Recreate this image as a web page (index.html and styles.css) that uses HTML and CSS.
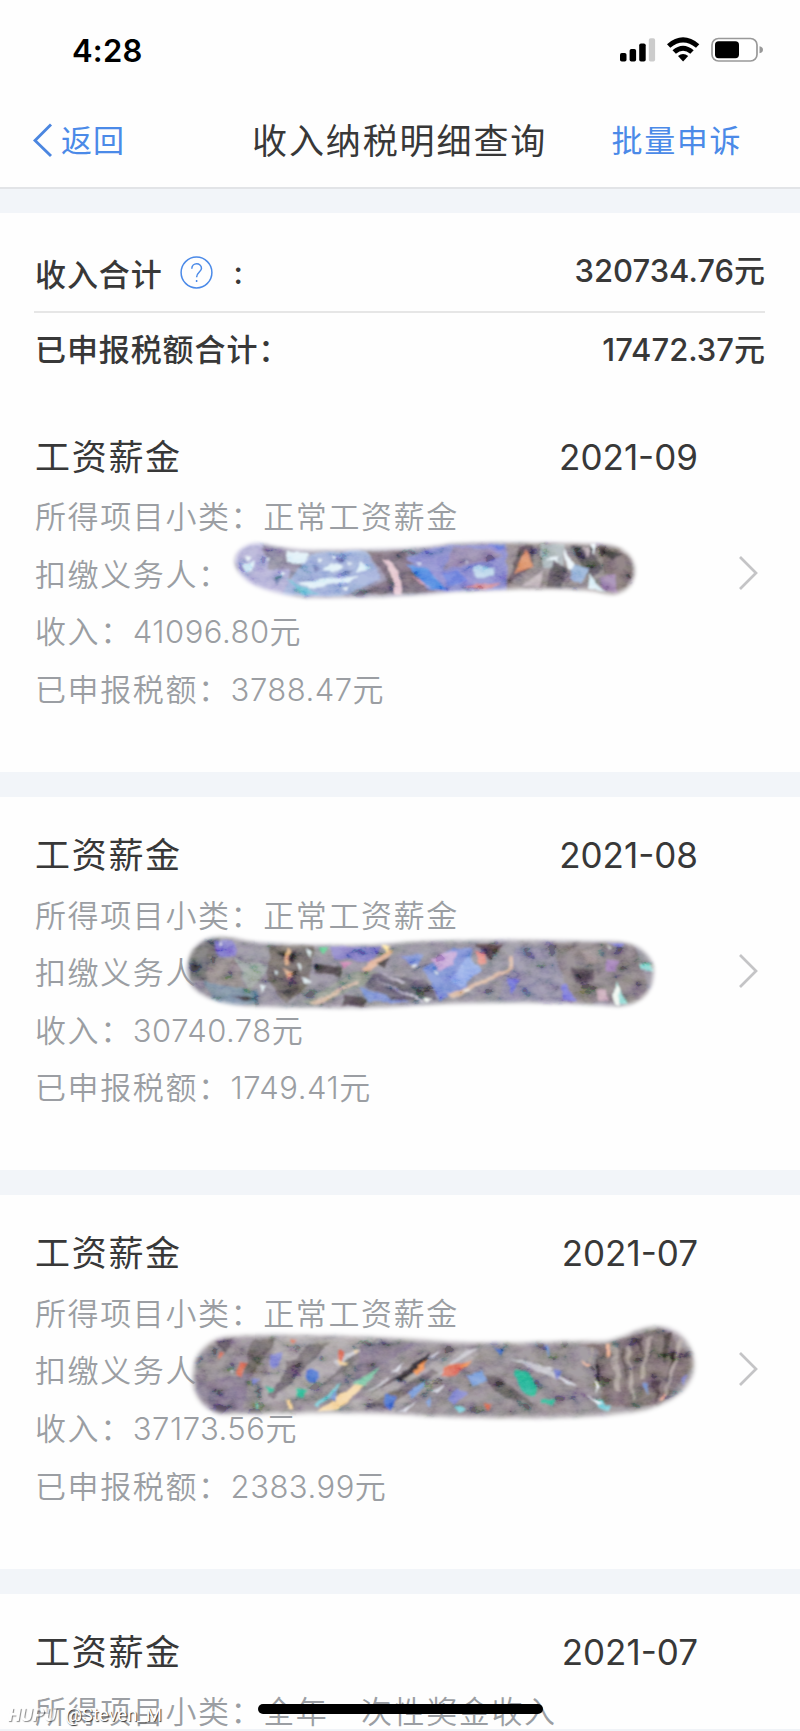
FILE: index.html
```html
<!DOCTYPE html>
<html lang="zh-CN">
<head>
<meta charset="utf-8">
<title>收入纳税明细查询</title>
<link rel="stylesheet" href="styles.css">
</head>
<body>
<div class="screen">
  <header class="status">
    <span class="clock">4:28</span>
    <svg class="status-icons" viewBox="0 0 144 26" width="144" height="26">
      <rect x="0" y="16" width="6.5" height="8.5" rx="1.8"/>
      <rect x="9.6" y="12" width="6.5" height="12.5" rx="1.8"/>
      <rect x="19.2" y="6.500" width="6.5" height="18" rx="1.8"/>
      <rect x="28.800" y="1.200" width="6.3" height="23.300" rx="1.800" fill="#ccc"/>
      <path d="M47 7.200Q63 -6.500 79.300 7.200L76 10.800Q63 .2 50.300 10.800Z"/>
      <path d="M52.500 13.200Q63 4.200 73.700 13.200L70.300 16.700Q63 10.800 55.900 16.700Z"/>
      <path d="M58 19Q63 15 68.200 19L63.100 24.600Z"/>
      <rect x="92" y="1.500" width="45" height="22.500" rx="6.500" fill="#fff" stroke="#999" stroke-width="1.700"/>
      <rect x="95" y="4.200" width="24" height="17" rx="3.600"/>
      <path d="M139.500 9.300Q143 10 143 12.800Q143 15.500 139.500 16.300Z" fill="#999"/>
    </svg>
  </header>
  <nav class="nav">
    <a class="back"><svg width="20" height="35" viewBox="0 0 20 35"><path d="M18 1.500L2 17.500L18 33" fill="none" stroke="#4b86e0" stroke-width="2.900"/></svg><span>返回</span></a>
    <h1 class="nav-title">收入纳税明细查询</h1>
    <a class="batch">批量申诉</a>
  </nav>
  <div class="band first"></div>
  <section class="summary">
    <div class="sum-row income">
      <span class="sum-label">收入合计</span>
      <svg class="help" width="33" height="33" viewBox="0 0 33 33" fill="none" stroke="#4b8ae8" stroke-width="1.500"><circle cx="16.500" cy="16.500" r="15.400"/><path d="M11.800 12.800C11.800 6.200 21.500 6.400 21.500 12.300C21.500 16 16.600 16.300 16.600 21.300"/><path d="M16.600 24v2"/></svg>
      <span class="sum-label colon">:</span>
      <span class="sum-value"><span class="n">320734.76</span>元</span>
    </div>
    <div class="sum-row tax">
      <span class="sum-label">已申报税额合计：</span>
      <span class="sum-value"><span class="n">17472.37</span>元</span>
    </div>
  </section>

  <article class="card">
    <div class="head"><h2>工资薪金</h2><time>2021-09</time></div>
    <p>所得项目小类：正常工资薪金</p>
    <p>扣缴义务人：</p>
    <p>收入：<span class="n">41096.80</span>元</p>
    <p>已申报税额：<span class="n">3788.47</span>元</p>
    <svg class="arrow" width="20" height="36" viewBox="0 0 20 36"><path d="M2 2L18 18L2 34"/></svg>
    <svg class="smudge s1" width="440" height="90" viewBox="0 0 1320 270">
      <defs>
        <filter id="soft" x="-5%" y="-20%" width="110%" height="140%"><feGaussianBlur stdDeviation="7"/></filter>
        <filter id="shard" x="-5%" y="-20%" width="110%" height="140%"><feTurbulence type="fractalNoise" baseFrequency=".02 .03" numOctaves="2" seed="4" result="t"/><feDisplacementMap in="SourceGraphic" in2="t" scale="18" xChannelSelector="R" yChannelSelector="G"/><feGaussianBlur stdDeviation="3.500"/></filter>
        <filter id="grain" x="0" y="0" width="100%" height="100%"><feTurbulence type="fractalNoise" baseFrequency=".018 .026" numOctaves="4" seed="8"/><feColorMatrix values="2.2 .6 0 0 -.9  1.800 1 0 0 -.9  1.800 .4 .6 0 -.9  0 0 0 0 1"/></filter>
        <mask id="m1"><path filter="url(#soft)" fill="#fff" d="M45 130C45 95 75 70 115 72C170 78 200 92 300 92C420 88 580 94 690 72C800 66 1000 68 1160 74C1215 82 1245 115 1243 155C1240 205 1195 230 1155 220C1090 200 900 204 700 214C550 232 380 232 260 232C140 216 60 190 45 130Z"/></mask>
      </defs>
      <g mask="url(#m1)">
        <rect width="1320" height="270" fill="#918ca5"/>
        <g filter="url(#shard)">
          <path fill="#aaa7d2" d="M40 60H190L220 230H60Z"/><path fill="#98a9d6" d="M270 100L440 90L480 180L360 230H180L230 150Z"/>
          <path fill="#8a879c" d="M120 60L210 80L250 145L150 150Z"/><path fill="#dff0f8" d="M200 95L265 98L255 130L205 127ZM65 130L105 125L98 150L72 154ZM310 145L350 130L370 140L340 160ZM420 120L450 145L410 155ZM230 185L420 168L380 190L270 205Z"/>
          <path fill="#ecf7fb" d="M75 108L92 112L82 122ZM135 112L148 117L139 124ZM180 155L195 160L185 170ZM290 115L305 120L296 128ZM340 105L352 112L343 118ZM385 125L398 130L388 138ZM365 200L385 198L380 210ZM258 210L272 208L262 225Z"/>
          <path fill="#6b77ab" d="M280 135L305 145L285 155ZM350 115L380 120L360 130ZM370 155L400 150L380 165ZM160 175L190 165L170 195Z"/>
          <path fill="#756677" d="M435 90L560 95L650 220H420L500 180Z"/><path fill="#e7c7d2" d="M485 115L510 120Q550 165 545 225H520Q525 160 485 115Z"/>
          <path fill="#8283c9" d="M560 110L680 75H860V215H650Z"/><path fill="#4d88df" d="M555 130L620 145L680 210H630Z"/><path fill="#cf9daf" d="M570 160L640 205L600 190Z"/>
          <path fill="#b8d3ea" d="M760 140L825 145L820 170H765Z"/><path fill="#8d80a5" d="M700 80L800 85L850 110L670 150Z"/><path fill="#5f74d8" d="M670 160L720 150L740 180L680 205ZM800 72L855 70L845 90Z"/><path fill="#d3dbf0" d="M580 126L605 130L600 136ZM735 118L745 124L737 130Z"/>
          <path fill="#8c8386" d="M860 65H1260V240H860Z"/><path fill="#60535c" d="M900 75L940 75V140L860 190Z"/><path fill="#d88663" d="M920 90L940 140L880 160Z"/>
          <path fill="#a3aeb4" d="M960 75H1030V145L970 140Z"/><path fill="#5b545d" d="M1000 125L1045 150L1020 205H980ZM1050 75L1110 80L1150 150L1110 180Z"/>
          <path fill="#e9f4fb" d="M1030 80L1070 150L1045 150ZM1112 70H1128L1120 105ZM975 118L1012 112V130Z"/><path fill="#91add7" d="M1060 130L1110 145L1080 190L1050 175Z"/>
          <path fill="#b9acb3" d="M905 200L970 150L960 200ZM1080 85L1105 80L1110 110Z"/>
          <path fill="#d8edf6" d="M1110 160L1155 220L1105 205Z"/><path fill="#76676a" d="M1140 75L1200 90L1245 140L1220 200L1160 210Z"/><path fill="#413a3e" d="M1140 90L1210 100L1180 125Z"/><path fill="#957ca8" d="M1140 170L1185 165L1190 220L1150 215Z"/>
          <path fill="#71bed6" d="M200 170L250 200L300 220L250 225Z"/><path fill="#d48e96" d="M720 200L850 188L790 212Z"/>
        </g>
        <rect width="1320" height="270" filter="url(#grain)" opacity=".55" style="mix-blend-mode:soft-light"/>
      </g>
    </svg>
  </article>
  <div class="band"></div>
  <article class="card">
    <div class="head"><h2>工资薪金</h2><time>2021-08</time></div>
    <p>所得项目小类：正常工资薪金</p>
    <p>扣缴义务人：</p>
    <p>收入：<span class="n">30740.78</span>元</p>
    <p>已申报税额：<span class="n">1749.41</span>元</p>
    <svg class="arrow" width="20" height="36" viewBox="0 0 20 36"><path d="M2 2L18 18L2 34"/></svg>
    <svg class="smudge s2" width="500" height="100" viewBox="0 0 1500 300">
      <defs><mask id="m2"><path filter="url(#soft)" fill="#fff" d="M52 150C55 90 90 52 150 52C205 52 220 70 330 72C440 78 590 80 700 68C850 58 1200 62 1340 66C1410 70 1452 110 1450 160C1448 220 1405 258 1340 258C1200 245 900 244 720 256C600 268 350 262 220 256C120 245 50 215 52 150Z"/></mask></defs>
      <g mask="url(#m2)">
        <rect width="1500" height="300" fill="#8b8794"/>
        <g filter="url(#shard)">
          <path fill="#6b676c" d="M50 80L150 50L130 190L60 180Z"/><path fill="#807ac8" d="M130 65L190 60L200 105L145 110Z"/><path fill="#8b8183" d="M120 110L200 120L230 215L110 190Z"/><path fill="#9da6a4" d="M195 115L300 140L240 210Z"/>
          <path fill="#71869a" d="M100 185L270 215L240 260H140Z"/><path fill="#6b6261" d="M300 75H430L420 190L350 250L290 180Z"/><path fill="#474144" d="M320 100L380 90L370 130ZM330 210L390 195L360 240ZM430 130L520 145L510 170L440 160ZM520 225L600 235L580 260H510Z"/>
          <path fill="#e0b18a" d="M350 80L362 95L355 135H345ZM340 145L365 160L355 180Z"/><path fill="#d8e7ec" d="M405 90L420 95L418 115ZM390 170L430 185L405 195ZM270 190L290 195L280 215ZM385 130L395 140L388 155ZM320 150L330 160L322 170Z"/>
          <path fill="#54c88c" d="M445 78L475 78L460 105Z"/><path fill="#8179c2" d="M480 78L640 80L600 125L490 115Z"/><path fill="#c87bac" d="M510 125L550 130L525 150Z"/>
          <path fill="#92978f" d="M560 150L630 155L590 195L430 255L400 245Z"/><path fill="#d6b9a8" d="M420 248L560 180L570 185L440 255Z"/><path fill="#dfad95" d="M570 145L660 90L670 100L600 150Z"/><path fill="#ffe39a" d="M640 75L665 78L650 100Z"/>
          <path fill="#656070" d="M610 160L760 180L800 235L690 245L580 200Z"/><path fill="#c8c3d6" d="M610 175L760 240L750 245ZM620 150L700 190L695 195ZM700 215L770 245L760 250Z"/><path fill="#778bd1" d="M570 205L720 250L600 245ZM690 110L760 100L740 145ZM850 80H910L890 200L810 245L760 150Z"/><path fill="#c4a5d5" d="M780 115L860 90L850 135L810 155Z"/>
          <path fill="#91aae7" d="M890 110L940 150L870 200L840 180Z"/><path fill="#5c4750" d="M920 75H1000L960 115Z"/><path fill="#e38c86" d="M915 95L945 100L950 130L930 135Z"/><path fill="#8b869f" d="M1040 80H1150L1190 245H980Z"/><path fill="#d6b3a0" d="M830 225L1030 140L1035 148L850 235ZM1015 110L1028 108L1030 145L1018 150Z"/>
          <path fill="#81787d" d="M1150 65H1390L1450 250H1200Z"/><path fill="#574b54" d="M1200 140L1280 145L1270 190L1220 190Z"/><path fill="#9a8e91" d="M1230 90L1290 85L1300 130L1250 130Z"/><path fill="#9a77b4" d="M1310 115L1345 120L1340 155L1310 150Z"/><path fill="#7374d7" d="M1170 195L1190 195L1215 245L1180 240ZM1010 170L1050 180L1020 220ZM1310 70L1360 70L1350 85Z"/>
          <path fill="#c3a2b2" d="M1280 210L1310 205L1315 245L1285 245Z"/><path fill="#95d8d5" d="M1410 130L1440 125L1450 155L1415 150ZM1340 185L1370 250H1330Z"/><path fill="#f1f6f0" d="M760 230L790 230L775 245ZM790 152L808 158L800 163ZM1340 195L1350 205L1345 255H1328ZM880 205L900 210L880 215ZM725 132L740 136L730 144ZM1310 82L1322 86L1314 92ZM150 65L160 69L154 75Z"/><path fill="#3d383b" d="M70 120L80 130L75 145ZM180 225L250 235L230 250ZM620 130L660 115L640 145Z"/>
        </g>
        <rect width="1500" height="300" filter="url(#grain)" opacity=".55" style="mix-blend-mode:soft-light"/>
      </g>
    </svg>
  </article>
  <div class="band"></div>
  <article class="card">
    <div class="head"><h2>工资薪金</h2><time>2021-07</time></div>
    <p>所得项目小类：正常工资薪金</p>
    <p>扣缴义务人：</p>
    <p>收入：<span class="n">37173.56</span>元</p>
    <p>已申报税额：<span class="n">2383.99</span>元</p>
    <svg class="arrow" width="20" height="36" viewBox="0 0 20 36"><path d="M2 2L18 18L2 34"/></svg>
    <svg class="smudge s3" width="540" height="120" viewBox="0 0 1568 348">
      <defs><mask id="m3"><path filter="url(#soft)" fill="#fff" d="M68 190C70 125 110 85 170 78C300 70 600 78 760 90C900 104 1150 90 1260 92C1330 84 1350 48 1420 50C1485 55 1525 110 1520 170C1510 240 1440 270 1380 288C1250 318 900 316 720 304C550 290 350 300 150 300C90 285 65 240 68 190Z"/></mask></defs>
      <g mask="url(#m3)">
        <rect width="1568" height="348" fill="#8a8289"/>
        <g filter="url(#shard)">
          <path fill="#655b5e" d="M130 90L180 80L160 130ZM240 85L310 85L200 240ZM640 200L700 180L600 250L580 245ZM890 190L960 195L1060 280L950 240Z"/><path fill="#a09a9e" d="M310 80H600L420 240L250 280ZM500 280L860 110L900 130L650 295Z"/>
          <path fill="#6f676d" d="M400 100L470 90L300 260L280 250ZM560 100L620 90L430 230ZM560 285L760 170L780 180L620 290ZM340 150L370 140L330 220Z"/>
          <path fill="#c6c5cd" d="M470 150L610 88L600 100L480 165ZM560 245L640 190L635 205ZM860 118L900 108L760 200ZM180 170L190 175L180 182ZM980 140L1080 160L1180 220L1070 180Z"/>
          <path fill="#7b7085" d="M70 210L240 180L210 300H90ZM560 95H720L530 210Z"/><path fill="#d96853" d="M200 150L220 155L210 195L195 190ZM490 110L510 120L500 150L485 155ZM795 165L870 150L830 190L785 195ZM910 270L935 275L920 290ZM1350 135L1365 145L1355 155ZM140 120L155 125L145 145ZM345 85L365 85L352 98Z"/>
          <path fill="#777bcb" d="M290 130L330 125L320 165L295 170ZM240 195L265 205L240 220ZM1110 170L1140 175L1130 205ZM830 230L870 240L830 270L805 260ZM1480 180L1500 190L1490 220Z"/>
          <path fill="#3f68c9" d="M393 178Q412 160 435 180Q435 212 410 212Q390 205 393 178ZM625 245L660 250L640 290L620 275ZM940 105L970 110L960 130Z"/>
          <path fill="#25b593" d="M275 222Q290 215 303 228Q300 245 285 242ZM365 225L400 232L390 252L370 250ZM1000 175C1045 160 1070 220 1060 250C1025 245 1005 220 1000 175ZM1080 260L1120 255L1110 275L1080 272Z"/>
          <path fill="#f4d39c" d="M430 295L550 205L570 215L490 290ZM480 145L520 155L490 160ZM535 120L555 120L545 130ZM335 260L350 260L355 290H340Z"/><path fill="#7cc4a4" d="M530 215L610 165L570 220Z"/>
          <path fill="#2c262d" d="M650 200L760 120L740 155L670 210ZM1240 130L1255 140L1240 230Z"/><path fill="#f1914f" d="M700 180L750 145L735 170L710 190ZM840 160L875 145L850 170Z"/><path fill="#d6d9e4" d="M640 180L680 150L665 180ZM750 140L785 115L765 145ZM755 235L800 215L780 235ZM660 295L715 265L685 295ZM1130 190L1180 220L1150 220Z"/>
          <path fill="#779bd8" d="M860 185L910 175L920 210L880 220ZM690 240L740 205L735 230L700 260ZM460 255L490 220L480 265ZM740 270L760 250L755 280Z"/><path fill="#74cad9" d="M250 260L260 280L255 290ZM830 275L860 285L840 300ZM1230 255L1290 270L1270 300L1240 285ZM485 215L500 210L430 285L420 280Z"/>
          <path fill="#76686a" d="M1180 100L1280 95L1430 50L1530 150L1420 280H1260L1240 120Z"/><path fill="#a49894" d="M1280 105L1300 100L1310 240L1295 240ZM1325 100L1335 100L1350 260H1340ZM1385 80L1400 75L1375 200H1365ZM1480 80L1490 85L1440 250H1430ZM1215 110L1225 110L1222 180Z"/><path fill="#4c4141" d="M1310 110L1320 105L1325 240ZM1355 90L1375 75L1365 130ZM1400 210L1430 200L1410 270ZM1430 75L1460 60L1435 160ZM1455 130L1470 110L1440 230Z"/><path fill="#f0b295" d="M1270 95L1280 100L1278 135H1268ZM1195 145L1225 160L1210 165ZM1420 260L1435 240V260Z"/><path fill="#eff2fb" d="M1230 200L1245 220L1238 240ZM1085 160L1115 170L1105 175ZM1205 245L1255 270L1240 275Z"/><path fill="#7595d1" d="M1090 100L1105 105L1100 140ZM1375 210L1390 215L1385 245Z"/>
        </g>
        <rect width="1568" height="348" filter="url(#grain)" opacity=".55" style="mix-blend-mode:soft-light"/>
      </g>
    </svg>
  </article>
  <div class="band"></div>
  <article class="card last">
    <div class="head"><h2>工资薪金</h2><time>2021-07</time></div>
    <p>所得项目小类：全年一次性奖金收入</p>
  </article>
  <div class="home-bar"></div>
  <div class="watermark"><b>HUPU</b><span>@Steven_M</span></div>
</div>
</body>
</html>
```
FILE: styles.css
```css
* { box-sizing: border-box; }
body { margin: 0; background: #fff; font-family: Inter, "Noto Sans CJK SC", sans-serif; color: #383838; }
h1, h2, p { margin: 0; font-weight: 400; }
.screen { position: relative; width: 800px; height: 1731px; overflow: hidden; background: #fefefe; display: flex; flex-direction: column; border-bottom: 2px solid #f0f3f7; }
.screen > * { flex-shrink: 0; }
.status { height: 98px; padding: 35px 36px 0 72px; display: flex; justify-content: space-between; align-items: flex-start; }
.clock { color: #000; font-size: 31px; line-height: 31px; font-weight: 600; letter-spacing: .2px; }
.status-icons { margin-top: 2px; }
.nav { height: 89px; display: flex; align-items: center; padding: 0 58px 4px 33px; }
.back, .batch { display: flex; align-items: center; color: #4b8ae8; font-size: 31px; line-height: 46px; letter-spacing: 1.6px; }
.back { width: 219px; gap: 8px; }
.back span { letter-spacing: .9px; }
.nav-title { font-size: 35px; line-height: 50px; letter-spacing: 1.9px; flex: 1; }
.band { height: 25px; background: #f2f5f9; }
.band.first { height: 26px; border-top: 2px solid #e2e4e7; }
.summary { height: 185.700px; padding: 0 35px 0 34px; }
.sum-row { display: flex; align-items: center; padding-left: 1px; font-weight: 500; font-size: 31px; letter-spacing: .9px; color: #383838; }
.income { height: 100px; padding-top: 20px; border-bottom: 2px solid #e6e6e6; }
.tax { height: 68px; }
.help { margin-left: 17px; }
.colon { margin-left: 21px; }
.sum-value { margin-left: auto; letter-spacing: 0; }
.income .sum-value { padding-bottom: 8px; }
.card { position: relative; height: 373.330px; padding: 33px 34px 0 35px; }
.head { height: 56.500px; display: flex; justify-content: space-between; align-items: flex-start; padding-right: 68px; }
.head h2, .head time { font-size: 35px; line-height: 50px; }
.head h2 { letter-spacing: 1.700px; }
.card p { font-size: 31px; line-height: 57.600px; letter-spacing: 1.600px; color: #9b9ea3; font-weight: 350; white-space: nowrap; }
.card .n { letter-spacing: .5px; }
.arrow { position: absolute; left: 738px; top: 156px; fill: none; stroke: #c4c4c6; stroke-width: 2.700; }
.smudge { position: absolute; }
.s1 { left: 220px; top: 121.300px; }
.s2 { left: 170px; top: 123px; }
.s3 { left: 170px; top: 115px; }
.home-bar { position: absolute; left: 258px; top: 1704px; width: 285px; height: 10px; border-radius: 5px; background: #000; }
.watermark { position: absolute; left: 8px; top: 1705px; display: flex; gap: 9px; align-items: center; font: 18.500px/20px Roboto, sans-serif; color: #fff; text-shadow: 1px 1px 1px #333; }
.watermark b { font-style: italic; font-weight: 900; opacity: .55; }
```
